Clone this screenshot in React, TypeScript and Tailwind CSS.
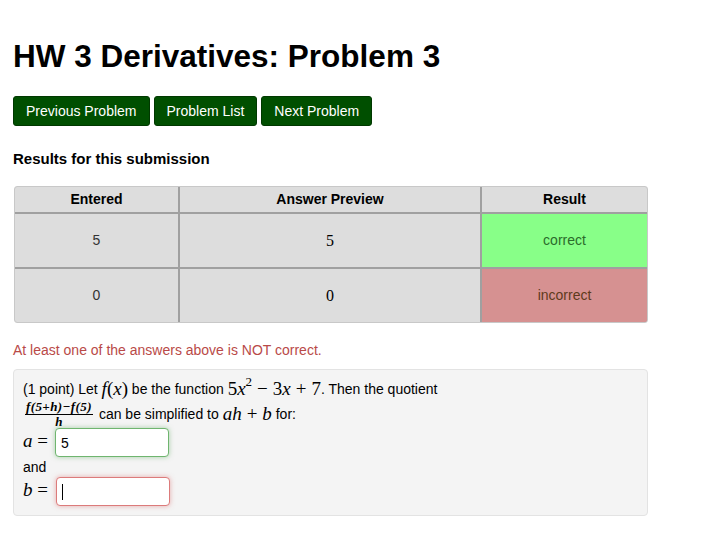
import React from "react";

const sans = { fontFamily: '"Liberation Sans", Arial, sans-serif' };
const serif = { fontFamily: '"Liberation Serif", "DejaVu Serif", serif' };

function M({ children }: { children: React.ReactNode }) {
  return (
    <span className="italic text-[19px] leading-[10px]" style={serif}>
      {children}
    </span>
  );
}

function R({ children }: { children: React.ReactNode }) {
  return (
    <span className="text-[19px] leading-[10px]" style={serif}>
      {children}
    </span>
  );
}

function Op({ children }: { children: React.ReactNode }) {
  return (
    <span className="mx-[5px] text-[19px] leading-[10px]" style={serif}>
      {children}
    </span>
  );
}

export default function App() {
  const rows = [
    { entered: "5", preview: "5", ok: true },
    { entered: "0", preview: "0", ok: false },
  ];

  return (
    <div className="min-h-[538px] w-[724px] bg-white text-[14px] text-[#333]" style={sans}>
      <div className="pl-[13px] pr-[76px] pt-[36px]">
        <h1 className="text-[31.5px] font-bold leading-[40px] text-black">HW 3 Derivatives: Problem 3</h1>

        <div className="mt-[20px] flex gap-[4px]">
          {["Previous Problem", "Problem List", "Next Problem"].map((b) => (
            <button
              key={b}
              className="h-[30px] rounded-[3px] border border-[#003800] bg-[#004f00] px-[12px] text-[14px] text-white"
            >
              {b}
            </button>
          ))}
        </div>

        <h2 className="mt-[23px] text-[15px] font-bold leading-[20px] text-black">Results for this submission</h2>

        <div className="ml-px mt-[17px] w-[634px] overflow-hidden rounded-[3px] border border-[#c8c8c8]">
          <div className="grid grid-cols-[163px_300px_1fr] gap-[2px] bg-[#a0a0a0]">
            <div className="flex h-[25px] items-center justify-center bg-[#dddddd] font-bold text-black">Entered</div>
            <div className="flex h-[25px] items-center justify-center bg-[#dddddd] font-bold text-black">Answer Preview</div>
            <div className="flex h-[25px] items-center justify-center bg-[#dddddd] font-bold text-black">Result</div>
            {rows.map((r) => (
              <React.Fragment key={r.entered}>
                <div className="flex h-[53px] items-center justify-center bg-[#dddddd] text-[#333]">{r.entered}</div>
                <div className="flex h-[53px] items-center justify-center bg-[#dddddd] text-[16px] text-black" style={serif}>
                  {r.preview}
                </div>
                <div
                  className={`flex h-[53px] items-center justify-center ${
                    r.ok ? "bg-[#88ff88] text-[#2b6b2b]" : "bg-[#d69191] text-[#5e3a1c]"
                  }`}
                >
                  {r.ok ? "correct" : "incorrect"}
                </div>
              </React.Fragment>
            ))}
          </div>
        </div>

        <p className="mt-[17px] leading-[20px] text-[#b94a48]">At least one of the answers above is NOT correct.</p>

        <div className="mt-[9px] w-[635px] rounded-[4px] border border-[#e3e3e3] bg-[#f4f4f4] px-[9px] pb-[9px] pt-[8px] text-black">
          <div className="flex h-[22px] items-center whitespace-pre">
            <span>(1 point) Let </span>
            <M>f</M>
            <R>(</R>
            <M>x</M>
            <R>)</R>
            <span> be the function </span>
            <R>5</R>
            <M>x</M>
            <span className="relative -top-[7px] text-[13px]" style={serif}>2</span>
            <Op>−</Op>
            <R>3</R>
            <M>x</M>
            <Op>+</Op>
            <R>7</R>
            <span>. Then the quotient</span>
          </div>
          <div className="flex h-[28px] items-center whitespace-pre">
            <span className="ml-[2px] mr-[6px] inline-flex flex-col items-center" style={serif}>
              <span className="border-b border-black px-[1px] pb-px text-[13px] font-bold italic leading-[12px] tracking-[0.4px]">
                f(5+h)−f(5)
              </span>
              <span className="pt-[1px] text-[13px] font-bold italic leading-[12px]">h</span>
            </span>
            <span>can be simplified to </span>
            <M>ah</M>
            <Op>+</Op>
            <M>b</M>
            <span> for:</span>
          </div>
          <div className="flex items-center gap-[4px]">
            <span className="w-[28px] whitespace-pre">
              <M>a</M>
              <R> =</R>
            </span>
            <input
              defaultValue="5"
              className="h-[29px] w-[114px] rounded-[4px] border border-[#6fb56f] bg-white px-[5px] text-[14px] text-black shadow-[0_0_5px_rgba(90,170,90,0.5)] outline-none"
              style={sans}
            />
          </div>
          <div className="leading-[20px]">and</div>
          <div className="flex items-center gap-[4px]">
            <span className="w-[29px] whitespace-pre">
              <M>b</M>
              <R> =</R>
            </span>
            <div className="flex h-[29px] w-[114px] items-center rounded-[4px] border border-[#dc7b7b] bg-white px-[5px] shadow-[0_0_5px_rgba(220,100,100,0.5)]">
              <span className="h-[16px] w-px bg-black" />
            </div>
          </div>
        </div>
      </div>
    </div>
  );
}
